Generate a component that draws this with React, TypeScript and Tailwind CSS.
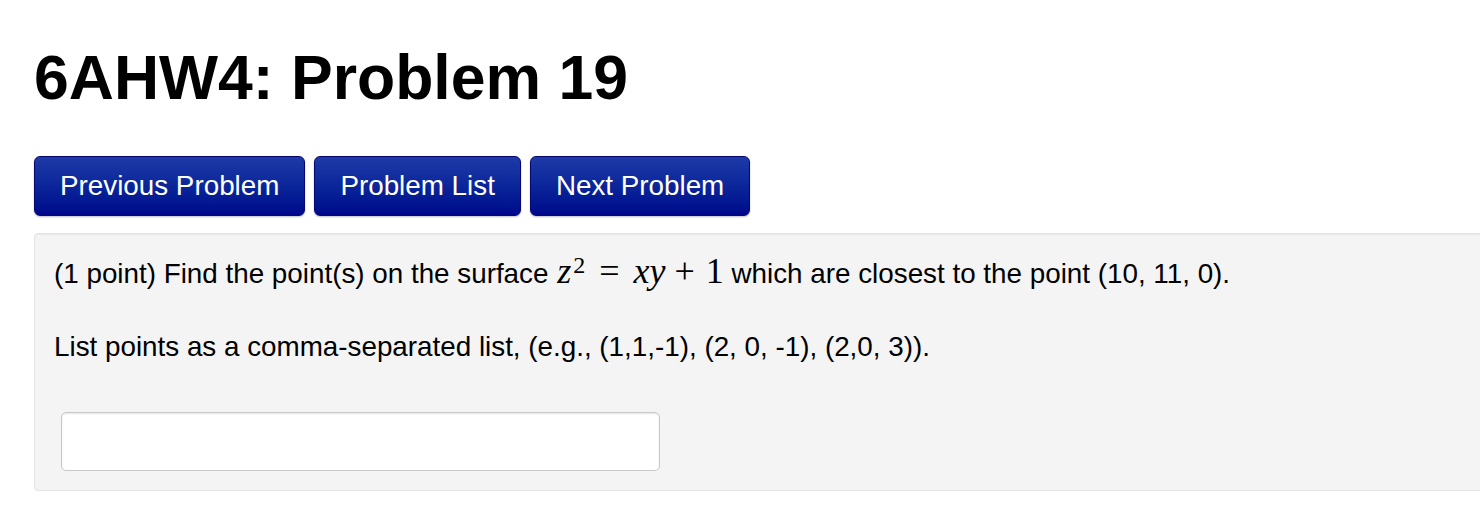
const sans = { fontFamily: '"Liberation Sans", Arial, sans-serif' };
const serif = { fontFamily: '"Liberation Serif", "Times New Roman", serif' };

function NavButton({ label }: { label: string }) {
  return (
    <button className="h-[60px] rounded-[6px] border border-[#06086f] bg-gradient-to-b from-[#1e3aa8] to-[#00068b] px-[25px] text-[27.8px] text-white shadow-[0_1px_2px_rgba(0,0,0,0.25)]">
      {label}
    </button>
  );
}

export default function App() {
  return (
    <div
      className="h-[512px] w-[1480px] overflow-hidden bg-white pl-[34px] text-black"
      style={sans}
    >
      <h1 className="mt-[43px] text-[62.5px] font-bold leading-[68px]">
        6AHW4: Problem 19
      </h1>

      <div className="mt-[45px] flex gap-[9px]">
        <NavButton label="Previous Problem" />
        <NavButton label="Problem List" />
        <NavButton label="Next Problem" />
      </div>

      <div className="mt-[17px] w-[1500px] rounded-[4px] border border-[#e3e3e3] bg-[#f4f4f4] p-[19px] shadow-[inset_0_1px_1px_rgba(0,0,0,0.05)]">
        <p className="h-[40px] text-[27.8px] leading-[40px]">
          (1 point) Find the point(s) on the surface{" "}
          <span className="ml-[1px] text-[36px] leading-none" style={serif}>
            <i>z</i>
            <sup className="relative top-[-10px] ml-[2px] mr-[14px] text-[24px] leading-none">
              2
            </sup>
            <span>=</span>
            <i className="ml-[14px]">xy</i>
            <span className="ml-[9px] mr-[11px]">+</span>
            <span>1</span>
          </span>{" "}
          which are closest to the point (10, 11, 0).
        </p>
        <p className="mt-[34px] text-[27.8px] leading-[40px]">
          List points as a comma-separated list, (e.g., (1,1,-1), (2, 0, -1), (2,0, 3)).
        </p>
        <input
          type="text"
          className="ml-[7px] mt-[45px] block h-[59px] w-[599px] rounded-[5px] border border-[#c8c8c8] bg-white shadow-[inset_0_1px_2px_rgba(0,0,0,0.1)] outline-none"
        />
      </div>
    </div>
  );
}
